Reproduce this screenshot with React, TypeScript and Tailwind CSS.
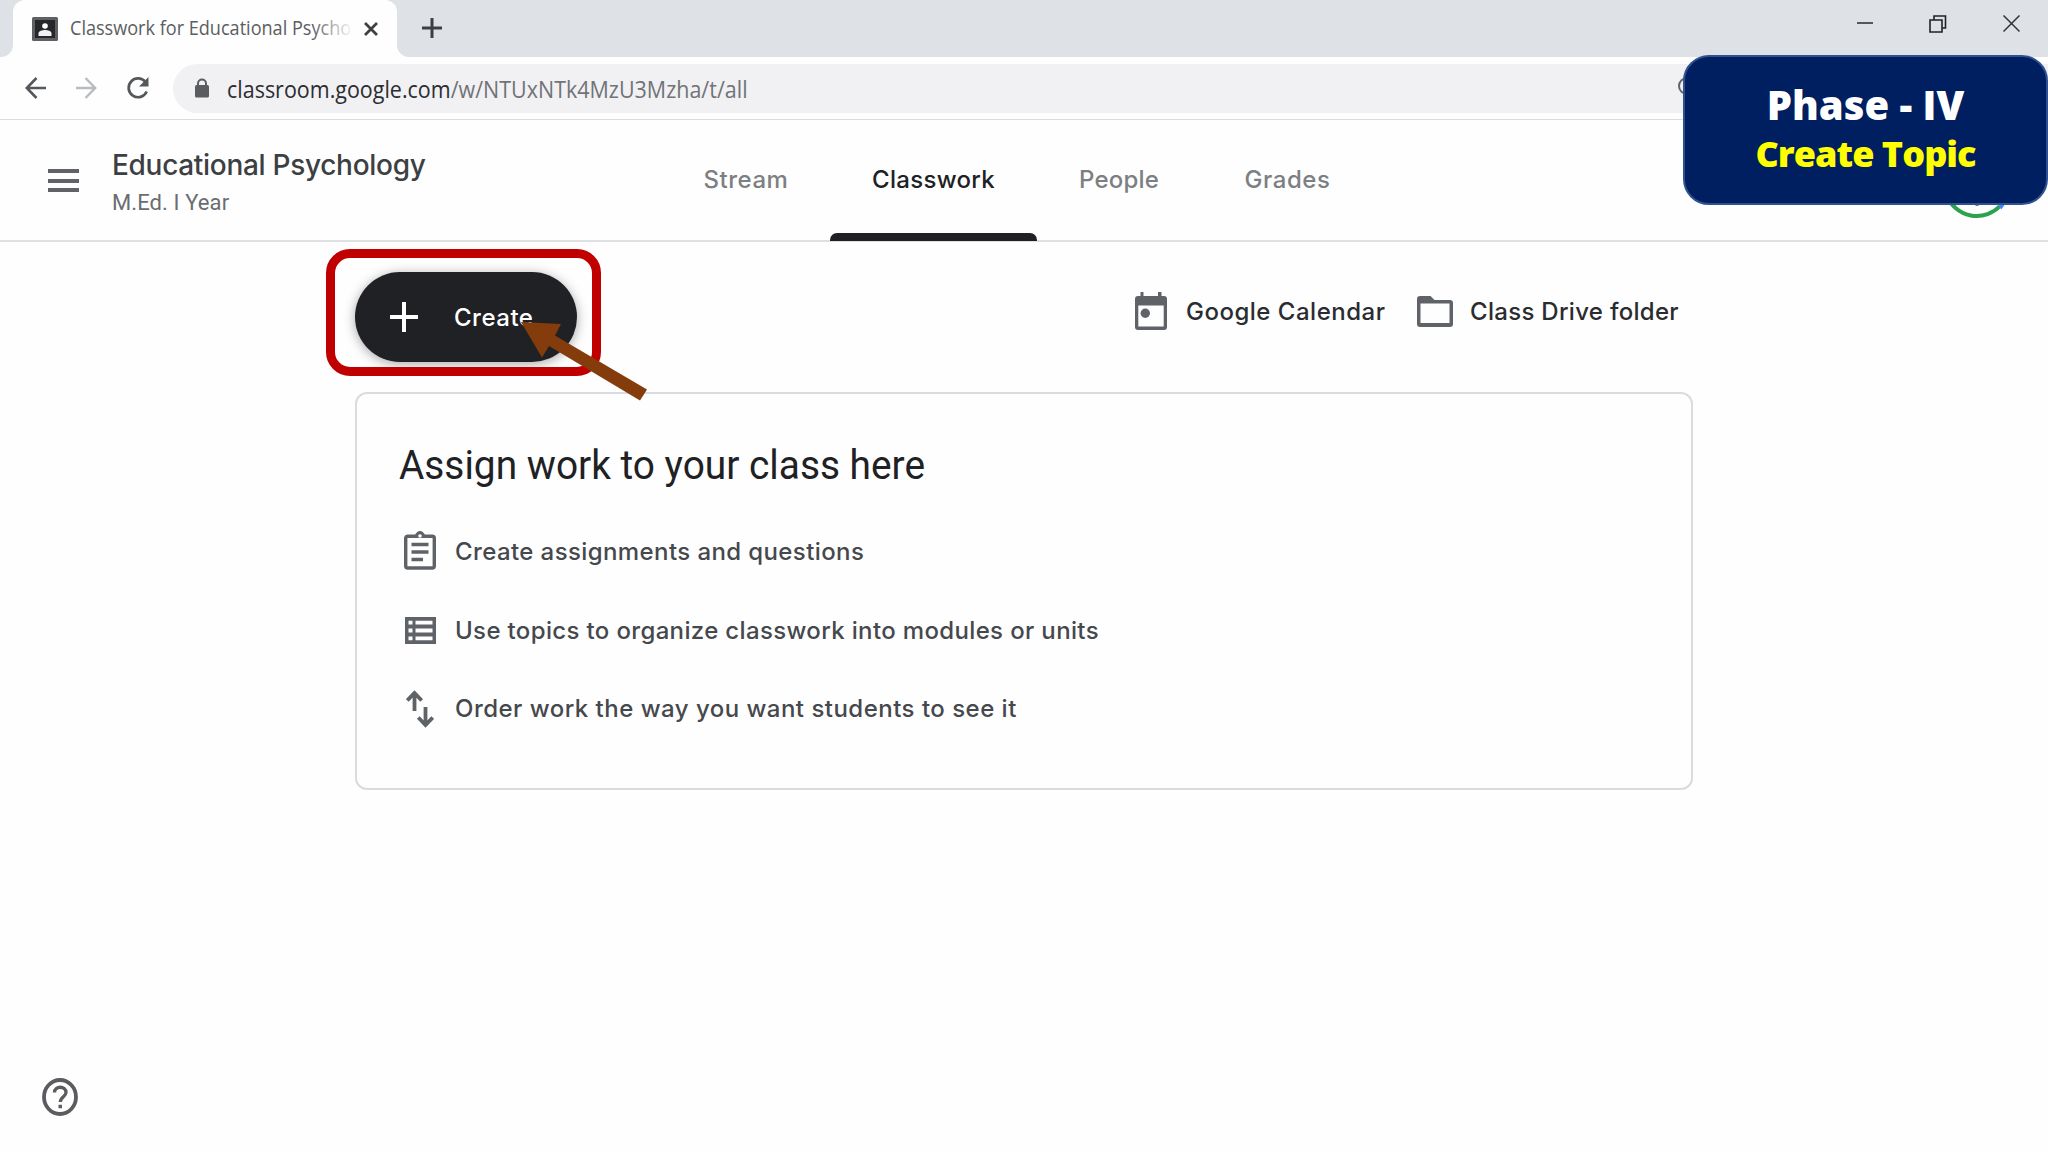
const tabs = [
  { label: "Stream", width: "w-[168px]", tracking: "tracking-[0.5px]" },
  { label: "Classwork", width: "w-[207px]", tracking: "tracking-[0.3px]", active: true },
  { label: "People", width: "w-[164px]", tracking: "tracking-[0.2px]" },
  { label: "Grades", width: "w-[173px]", tracking: "tracking-[0.6px]" },
];

function FaviconIcon() {
  return (
    <svg width="26" height="24" viewBox="0 0 26 24" className="shrink-0">
      <rect width="26" height="24" rx="1.5" fill="#5f6061" />
      <rect x="3" y="3" width="20" height="18" fill="#26272a" />
      <circle cx="13" cy="9" r="2.8" fill="#fff" />
      <path d="M6.5 19v-2.6c0-2.4 4-3.4 6.5-3.4s6.5 1 6.5 3.4V19z" fill="#f1f1f1" />
    </svg>
  );
}

function TabStrip() {
  return (
    <div className="flex h-[57px] bg-[#dee1e6]">
      <div className="relative ml-[13px] flex h-full w-[384px] items-center rounded-t-[12px] bg-[#fefefe] pl-[19px]">
        {/* flared corners where the tab meets the toolbar */}
        <svg width="12" height="12" className="absolute bottom-0 -left-3">
          <path d="M12 0v12H0A12 12 0 0 0 12 0z" fill="#fefefe" />
        </svg>
        <svg width="12" height="12" className="absolute -right-3 bottom-0">
          <path d="M0 0v12h12A12 12 0 0 1 0 0z" fill="#fefefe" />
        </svg>
        <FaviconIcon />
        <div className="relative ml-[12px] h-[30px] w-[282px]">
          <span className="absolute left-0 origin-left scale-x-[0.904] font-['Open_Sans',sans-serif] text-[20px] leading-[28px] whitespace-nowrap text-[#5a5d61]">
            Classwork for Educational Psycho
          </span>
          <div className="absolute inset-y-0 -right-1.5 w-[46px] bg-linear-to-r from-transparent to-[#fefefe] to-90%" />
        </div>
        <svg width="14" height="14" viewBox="0 0 14 14" stroke="#3c4043" strokeWidth="2.8" className="relative ml-[12px]">
          <path d="M1 1l12 12M13 1L1 13" />
        </svg>
      </div>
      <svg width="20" height="20" viewBox="0 0 20 20" stroke="#3c4043" strokeWidth="3" className="mt-[18px] ml-[25px]">
        <path d="M10 0v20M0 10h20" />
      </svg>
      <div className="mt-[15px] ml-auto flex pr-[28px]">
        <svg width="16" height="18" stroke="#333" strokeWidth="1.6">
          <path d="M0 8h16" />
        </svg>
        <svg width="18" height="18" fill="none" stroke="#222" strokeWidth="1.6" className="ml-[56px]">
          <path d="M1 5h12v12H1zM5 5V1h11.5v12H13" />
        </svg>
        <svg width="17" height="18" stroke="#333" strokeWidth="1.5" className="ml-[56px]">
          <path d="M.5.5l16 16M16.5.5l-16 16" />
        </svg>
      </div>
    </div>
  );
}

function Toolbar() {
  return (
    <div className="flex h-[63px] items-center border-b border-[#dadce0] bg-[#fefefe] pl-[25px]">
      <svg width="21" height="22" viewBox="0 0 21 22" fill="none" stroke="#55585b" strokeWidth="2.6">
        <path d="M21 11H2M11.5 1L1.8 11l9.7 10" />
      </svg>
      <svg width="21" height="22" viewBox="0 0 21 22" fill="none" stroke="#b9bbbe" strokeWidth="2.4" className="ml-[30px]">
        <path d="M0 11h19M9.5 1l9.7 10-9.7 10" />
      </svg>
      <svg width="24" height="24" viewBox="0 0 24 24" fill="none" stroke="#55585b" strokeWidth="2.7" className="ml-[29px]">
        <path d="M19.8 6.5A9.4 9.4 0 1 0 20.7 15.5" />
        <path d="M22.5 1v9.5H13z" fill="#55585b" stroke="none" />
      </svg>
      <div className="ml-[23px] flex h-[49px] flex-1 items-center rounded-l-full bg-[#f1f1f4] pl-[22px]">
        <svg width="14" height="20" viewBox="0 0 14 20">
          <path d="M3 8V5.5a4 4 0 0 1 8 0V8" fill="none" stroke="#5a5d60" strokeWidth="2" />
          <rect y="7" width="14" height="12.5" rx="1.5" fill="#5a5d60" />
        </svg>
        <span className="mt-px ml-[18px] origin-left scale-x-[0.895] font-['Open_Sans',sans-serif] text-[24px] leading-[48px] whitespace-nowrap text-[#707377]">
          <span className="text-[#2b2d31]">classroom.google.com</span>/w/NTUxNTk4MzU3Mzha/t/all
        </span>
        <svg width="20" height="24" viewBox="0 0 20 24" fill="none" stroke="#5f6368" strokeWidth="2" className="mr-[350px] ml-auto">
          <circle cx="9" cy="10" r="8" />
          <path d="M15 16l5 6" />
        </svg>
      </div>
    </div>
  );
}

function CourseHeader() {
  return (
    <header className="flex h-[122px] border-b-2 border-[#dfe0e4] bg-[#fefefe]">
      <div className="mt-[49px] ml-[48px] flex h-[23px] w-[31px] flex-col justify-between">
        <div className="h-[4px] bg-[#5f6368]" />
        <div className="h-[4px] bg-[#5f6368]" />
        <div className="h-[4px] bg-[#5f6368]" />
      </div>
      <div className="ml-[33px] w-[550px] pt-[25px]">
        <h1 className="text-[28px] leading-[40px] font-medium tracking-[-0.3px] text-[#3c4043]">Educational Psychology</h1>
        <p className="mt-[3px] font-[Roboto,sans-serif] text-[22px] leading-[30px] tracking-[0.1px] text-[#6a6d71]">M.Ed. I Year</p>
      </div>
      <nav className="flex">
        {tabs.map((tab) => (
          <div
            key={tab.label}
            className={`relative flex justify-center text-[24px] leading-[120px] font-medium ${tab.width} ${tab.tracking} ${
              tab.active ? "text-[#202124]" : "text-[#7c7f83]"
            }`}
          >
            {tab.label}
            {tab.active && <div className="absolute inset-x-0 -bottom-px h-[8px] rounded-t-[7px] bg-[#202024]" />}
          </div>
        ))}
      </nav>
    </header>
  );
}

function ActionRow() {
  return (
    <div className="flex h-[90px] w-full items-center">
      <button className="flex h-[90px] w-[222px] items-center rounded-full bg-[#202124] pl-[35px] text-white shadow-[0_2px_12px_rgba(0,0,0,0.35)]">
        <svg width="28" height="30" viewBox="0 0 28 30" stroke="#fff" strokeWidth="4">
          <path d="M14 0v30M0 15h28" />
        </svg>
        <span className="mt-px ml-[36px] text-[24px] leading-[32px] font-medium tracking-[0.5px]">Create</span>
      </button>
      <div className="ml-auto flex items-center pr-[13px] pb-[12px] text-[24px] leading-[32px] font-medium text-[#2a2c30]">
        <svg width="32" height="38" viewBox="0 0 32 38" fill="#5f6368" className="-ml-px">
          <path
            fillRule="evenodd"
            d="M5.5 0h3v4h14.5V0h3.5v4H29a3 3 0 0 1 3 3v28a3 3 0 0 1-3 3H3a3 3 0 0 1-3-3V7a3 3 0 0 1 3-3h2.500zM3.3 13.500V34.500h25.400v-21z"
          />
          <circle cx="10.3" cy="21.3" r="4.7" />
        </svg>
        <span className="mt-[2px] ml-[19px] w-[202px] tracking-[0.5px] whitespace-nowrap">Google Calendar</span>
        <svg width="36" height="31" viewBox="0 0 36 31" fill="#5f6368" className="mt-px ml-[29px]">
          <path
            fillRule="evenodd"
            d="M3 0h10.5l4 4H33a3 3 0 0 1 3 3v21a3 3 0 0 1-3 3H3a3 3 0 0 1-3-3V3a3 3 0 0 1 3-3zM3.500 7.500v19.500h29V7.500z"
          />
        </svg>
        <span className="mt-[2px] ml-[17px] w-[210px] tracking-[0.3px] whitespace-nowrap">Class Drive folder</span>
      </div>
    </div>
  );
}

function ClipboardIcon() {
  return (
    <svg width="32" height="39" viewBox="0 0 32 39" fill="none" stroke="#5f6368" className="-mt-[3px]">
      <rect x="1.7" y="5.2" width="28.6" height="31.8" rx="2" strokeWidth="3.4" />
      <path d="M11.5 5.500V5a4.500 4.500 0 0 1 9 0v.5z" fill="#5f6368" strokeWidth="1" />
      <circle cx="16" cy="5" r="1.8" fill="#fefefe" stroke="none" />
      <path d="M7.5 13.500h17M7.500 21h17M7.500 28.500h11.500" strokeWidth="3.3" />
    </svg>
  );
}

function TopicListIcon() {
  return (
    <svg width="31" height="27" viewBox="0 0 31 27" fill="#5f6368">
      <path
        fillRule="evenodd"
        d="M0 0h31v27H0zM3.500 3.700v3.800h4V3.700zM10.500 3.700v3.800h17V3.700zM3.500 11.600v3.800h4v-3.800zM10.500 11.600v3.800h17v-3.800zM3.500 19.500v3.800h4v-3.800zM10.500 19.500v3.800h17v-3.800z"
      />
    </svg>
  );
}

function ReorderIcon() {
  return (
    <svg width="28" height="38" viewBox="0 0 28 38" fill="none" stroke="#5f6368" strokeWidth="3.8">
      <path d="M8.500 21V3M1.300 10.500L8.500 3l7.200 7.500M19.500 17v18M12.300 27.500l7.200 7.500 7.200-7.500" />
    </svg>
  );
}

const tips = [
  { text: "Create assignments and questions", tracking: "tracking-[0.4px]", icon: <ClipboardIcon /> },
  { text: "Use topics to organize classwork into modules or units", tracking: "tracking-[0.35px]", icon: <TopicListIcon /> },
  { text: "Order work the way you want students to see it", tracking: "tracking-[0.48px]", icon: <ReorderIcon /> },
];

function AssignCard() {
  return (
    <section className="mt-[30px] h-[398px] rounded-[12px] border-2 border-[#dadbe0] pt-[47px] pl-[42px]">
      <h2 className="origin-left scale-x-[0.947] font-[Roboto,sans-serif] text-[41px] leading-[48px] whitespace-nowrap text-[#202124]">
        Assign work to your class here
      </h2>
      <ul className="mt-[43px] flex flex-col gap-[38.500px]">
        {tips.map((tip) => (
          <li key={tip.text} className="flex h-[40px] items-center">
            <div className="ml-[5px] flex w-[32px] justify-center">{tip.icon}</div>
            <span className={`ml-[19px] text-[24px] leading-[40px] font-medium whitespace-nowrap text-[#45484c] ${tip.tracking}`}>
              {tip.text}
            </span>
          </li>
        ))}
      </ul>
    </section>
  );
}

function PhaseBadge() {
  return (
    <div className="absolute top-[55px] left-[1683px] flex h-[150px] w-[365px] flex-col items-center rounded-[26px] border-2 border-[#2f528f] bg-[#001f60] pt-[23px] font-['Open_Sans',sans-serif] font-extrabold">
      <div className="text-[40px] leading-[50px] text-white">Phase - IV</div>
      <div className="text-[36px] leading-[48px] tracking-[-0.95px] text-[#ffff00]">Create Topic</div>
    </div>
  );
}

export default function App() {
  return (
    <div className="relative h-[1152px] w-[2048px] overflow-hidden bg-[#fefefe] font-[Inter,sans-serif]">
      <TabStrip />
      <Toolbar />
      <CourseHeader />
      <main className="mx-auto w-[1338px] pt-[30px]">
        <ActionRow />
        <AssignCard />
      </main>

      {/* account avatar, mostly hidden by the phase badge */}
      <svg width="68" height="68" viewBox="0 0 68 68" fill="none" strokeWidth="4" className="absolute top-[152px] left-[1943px]">
        <path d="M4 44A32 32 0 0 0 57 54" stroke="#2ba24c" />
        <path d="M57 56A32 32 0 0 0 64 44" stroke="#4285f4" />
        <path d="M34 50v4" stroke="#777" strokeWidth="3" />
      </svg>
      <PhaseBadge />

      {/* callout around the Create button */}
      <div className="absolute top-[249px] left-[326px] h-[127px] w-[275px] rounded-[24px] border-[9px] border-[#c00000]" />
      <svg width="130" height="84" viewBox="520 320 130 84" className="absolute top-[320px] left-[520px]">
        <path d="M521 322l40 2-6 11.500 92 54-7 11-91-54.500-7 11.500z" fill="#843c0c" />
      </svg>

      <svg width="36" height="38" viewBox="0 0 36 38" fill="none" stroke="#5a5c5f" className="absolute top-[1078px] left-[42px]">
        <ellipse cx="18" cy="19" rx="16" ry="17" strokeWidth="3.8" />
        <path d="M12.500 14.500c0-7 11.500-7 11.500 0 0 4-5.700 4.500-5.700 9.500" strokeWidth="3.3" />
        <path d="M16.500 28.500h3.500" strokeWidth="3.5" />
      </svg>
    </div>
  );
}
